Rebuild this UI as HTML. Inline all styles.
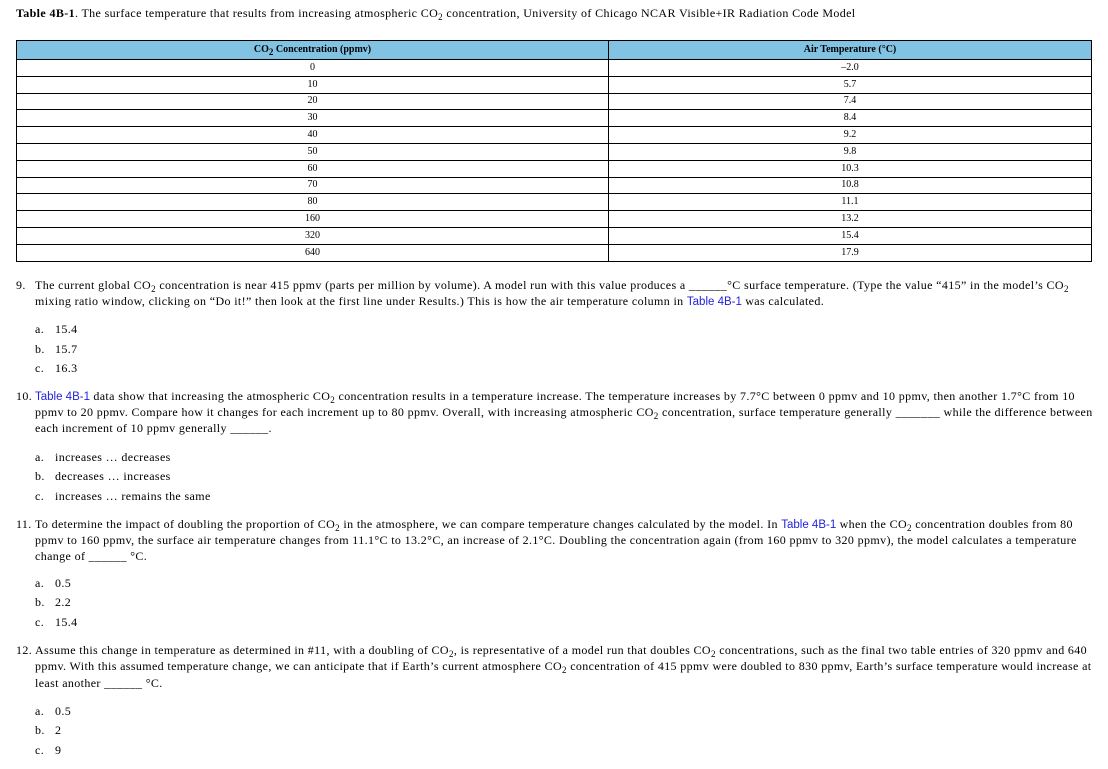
<!DOCTYPE html>
<html><head><meta charset="utf-8"><style>
body{margin:0;width:1108px;height:769px;background:#fff;font-family:"Liberation Serif",serif;font-size:12px;color:#000;position:relative;overflow:hidden}
.l{position:absolute;white-space:nowrap;line-height:14px;letter-spacing:0.37px}
.o span{position:absolute;left:20px}
sub{font-size:9px;line-height:0;vertical-align:-3px}
a{font-family:"Liberation Sans",sans-serif;font-size:11.5px;text-decoration:none;color:#2222dd;letter-spacing:0}
table{position:absolute;left:16px;top:40px;width:1076px;border-collapse:collapse;font-size:10px}
td,th{border:1px solid #000;text-align:center;height:15.8px;padding:0;line-height:14px}
th{background:#82c2e3;height:18px;font-weight:bold}
th:first-child,td:first-child{width:591px}
</style></head><body>
<div class="l" style="left:16px;top:6px"><b>Table 4B-1</b>. The surface temperature that results from increasing atmospheric CO<sub>2</sub> concentration, University of Chicago NCAR Visible+IR Radiation Code Model</div>
<table>
<tr><th>CO<sub>2</sub> Concentration (ppmv)</th><th>Air Temperature (°C)</th></tr>
<tr><td>0</td><td>–2.0</td></tr>
<tr><td>10</td><td>5.7</td></tr>
<tr><td>20</td><td>7.4</td></tr>
<tr><td>30</td><td>8.4</td></tr>
<tr><td>40</td><td>9.2</td></tr>
<tr><td>50</td><td>9.8</td></tr>
<tr><td>60</td><td>10.3</td></tr>
<tr><td>70</td><td>10.8</td></tr>
<tr><td>80</td><td>11.1</td></tr>
<tr><td>160</td><td>13.2</td></tr>
<tr><td>320</td><td>15.4</td></tr>
<tr><td>640</td><td>17.9</td></tr>
</table>

<div class="l" style="left:16px;top:278px">9.</div>
<div class="l" style="left:35px;top:278px">The current global CO<sub>2</sub> concentration is near 415 ppmv (parts per million by volume). A model run with this value produces a ______°C surface temperature. (Type the value “415” in the model’s CO<sub>2</sub></div>
<div class="l" style="left:35px;top:294px">mixing ratio window, clicking on “Do it!” then look at the first line under Results.) This is how the air temperature column in <a>Table 4B-1</a> was calculated.</div>
<div class="l o" style="left:35px;top:322px">a.<span>15.4</span></div>
<div class="l o" style="left:35px;top:342px">b.<span>15.7</span></div>
<div class="l o" style="left:35px;top:361px">c.<span>16.3</span></div>

<div class="l" style="left:16px;top:389px">10.</div>
<div class="l" style="left:35px;top:389px"><a>Table 4B-1</a> data show that increasing the atmospheric CO<sub>2</sub> concentration results in a temperature increase. The temperature increases by 7.7°C between 0 ppmv and 10 ppmv, then another 1.7°C from 10</div>
<div class="l" style="left:35px;top:405px">ppmv to 20 ppmv. Compare how it changes for each increment up to 80 ppmv. Overall, with increasing atmospheric CO<sub>2</sub> concentration, surface temperature generally _______ while the difference between</div>
<div class="l" style="left:35px;top:421px">each increment of 10 ppmv generally ______.</div>
<div class="l o" style="left:35px;top:450px">a.<span>increases … decreases</span></div>
<div class="l o" style="left:35px;top:469px">b.<span>decreases … increases</span></div>
<div class="l o" style="left:35px;top:489px">c.<span>increases … remains the same</span></div>

<div class="l" style="left:16px;top:517px">11.</div>
<div class="l" style="left:35px;top:517px">To determine the impact of doubling the proportion of CO<sub>2</sub> in the atmosphere, we can compare temperature changes calculated by the model. In <a>Table 4B-1</a> when the CO<sub>2</sub> concentration doubles from 80</div>
<div class="l" style="left:35px;top:533px">ppmv to 160 ppmv, the surface air temperature changes from 11.1°C to 13.2°C, an increase of 2.1°C. Doubling the concentration again (from 160 ppmv to 320 ppmv), the model calculates a temperature</div>
<div class="l" style="left:35px;top:549px">change of ______ °C.</div>
<div class="l o" style="left:35px;top:576px">a.<span>0.5</span></div>
<div class="l o" style="left:35px;top:595px">b.<span>2.2</span></div>
<div class="l o" style="left:35px;top:615px">c.<span>15.4</span></div>

<div class="l" style="left:16px;top:643px">12.</div>
<div class="l" style="left:35px;top:643px">Assume this change in temperature as determined in #11, with a doubling of CO<sub>2</sub>, is representative of a model run that doubles CO<sub>2</sub> concentrations, such as the final two table entries of 320 ppmv and 640</div>
<div class="l" style="left:35px;top:659px">ppmv. With this assumed temperature change, we can anticipate that if Earth’s current atmosphere CO<sub>2</sub> concentration of 415 ppmv were doubled to 830 ppmv, Earth’s surface temperature would increase at</div>
<div class="l" style="left:35px;top:676px">least another ______ °C.</div>
<div class="l o" style="left:35px;top:704px">a.<span>0.5</span></div>
<div class="l o" style="left:35px;top:723px">b.<span>2</span></div>
<div class="l o" style="left:35px;top:743px">c.<span>9</span></div>
</body></html>
